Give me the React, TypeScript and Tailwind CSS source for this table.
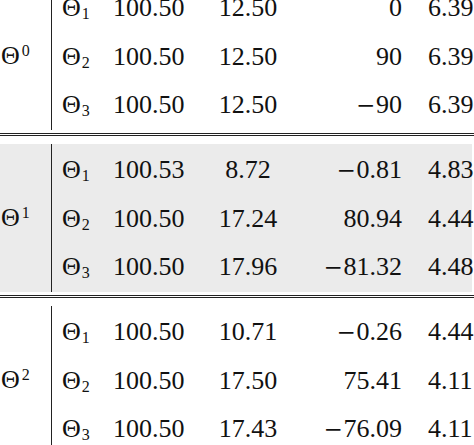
import React from "react";

type Row = [number, string, string, string, string];

const sections: { label: number; shaded: boolean; rows: Row[] }[] = [
  {
    label: 0,
    shaded: false,
    rows: [
      [1, "100.50", "12.50", "0", "6.39"],
      [2, "100.50", "12.50", "90", "6.39"],
      [3, "100.50", "12.50", "-90", "6.39"],
    ],
  },
  {
    label: 1,
    shaded: true,
    rows: [
      [1, "100.53", "8.72", "-0.81", "4.83"],
      [2, "100.50", "17.24", "80.94", "4.44"],
      [3, "100.50", "17.96", "-81.32", "4.48"],
    ],
  },
  {
    label: 2,
    shaded: false,
    rows: [
      [1, "100.50", "10.71", "-0.26", "4.44"],
      [2, "100.50", "17.50", "75.41", "4.11"],
      [3, "100.50", "17.43", "-76.09", "4.11"],
    ],
  },
];

// minus sign gets the wide TeX spacing
function Signed({ value }: { value: string }) {
  if (!value.startsWith("-")) return <span>{value}</span>;
  return (
    <span>
      <span
        className="inline-block w-[20px] text-left text-[23px] font-light"
        style={{ fontFamily: '"DejaVu Serif", serif' }}
      >
        −
      </span>
      {value.slice(1)}
    </span>
  );
}

function Section({ label, shaded, rows }: { label: number; shaded: boolean; rows: Row[] }) {
  return (
    <div className={`flex h-[148px] w-[472px] ${shaded ? "bg-[#ebebeb]" : ""}`}>
      <div className="w-[51px] flex items-center pl-[1px]">
        <span>
          Θ
          <span className="inline-block align-baseline text-[16px] relative top-[-8px] ml-[2px]">
            {label}
          </span>
        </span>
      </div>
      <div className="w-px bg-[#222]" />
      <div className="flex flex-col pt-[2px]">
        {rows.map(([i, a, b, c, d]) => (
          <div key={i} className="flex h-[48.5px] items-center">
            <div className="w-[61px] pl-[10px]">
              Θ
              <span className="inline-block align-baseline text-[16px] relative top-[3px] ml-[1px]">
                {i}
              </span>
            </div>
            <div className="w-[87px]">{a}</div>
            <div className="w-[96px] text-center">{b}</div>
            <div className="w-[106px] text-right">
              <Signed value={c} />
            </div>
            <div className="w-[70px] pl-[26px]">{d}</div>
          </div>
        ))}
      </div>
    </div>
  );
}

function Rule() {
  return <div className="mt-[3px] mb-[8px] h-[3px] border-y border-[#222] w-full" />;
}

export default function App() {
  return (
    <div
      className="w-[474px] h-[445px] overflow-hidden bg-white text-[#111] text-[26px] leading-none"
      style={{ fontFamily: '"Liberation Serif", "DejaVu Serif", serif' }}
    >
      <div className="-mt-[18px]">
        {sections.map((s, idx) => (
          <React.Fragment key={s.label}>
            {idx > 0 && <Rule />}
            <Section {...s} />
          </React.Fragment>
        ))}
      </div>
    </div>
  );
}
